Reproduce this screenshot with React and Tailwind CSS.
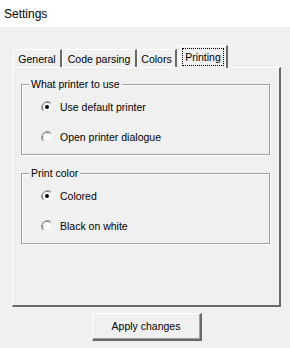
import React from "react";

function Radio({ checked }) {
  return (
    <svg width="12" height="12" viewBox="0 0 12 12" className="shrink-0">
      <path d="M10.2 1.8 A6 6 0 0 0 1.8 10.2" fill="none" stroke="#a0a0a0" strokeWidth="1" />
      <path d="M1.8 10.2 A6 6 0 0 0 10.2 1.8" fill="none" stroke="#ffffff" strokeWidth="1" />
      <path d="M9.5 2.5 A5 5 0 0 0 2.5 9.5" fill="none" stroke="#696969" strokeWidth="1" />
      <path d="M2.5 9.5 A5 5 0 0 0 9.5 2.5" fill="none" stroke="#e3e3e3" strokeWidth="1" />
      <circle cx="6" cy="6" r="4" fill="#ffffff" />
      {checked && <circle cx="6" cy="6" r="2" fill="#000000" />}
    </svg>
  );
}

function RadioRow({ checked, label }) {
  return (
    <div className="flex items-center h-[14px] pl-[19px]">
      <Radio checked={checked} />
      <span className="ml-[7px] text-[10.5px] leading-[14px] text-black whitespace-nowrap">{label}</span>
    </div>
  );
}

function Group({ title, children }) {
  return (
    <div className="relative w-[249px] h-[71px] border border-[#a0a0a0] shadow-[inset_1px_1px_0_#ffffff,1px_1px_0_#ffffff]">
      <span className="absolute left-[7px] top-[-9px] px-[2px] bg-[#f0f0f0] text-[10.5px] leading-[16px] text-black whitespace-nowrap">
        {title}
      </span>
      <div className="flex flex-col gap-[16px] pt-[15px]">{children}</div>
    </div>
  );
}

function Tab({ label, selected, w }) {
  if (selected) {
    return (
      <div className={`relative z-10 ${w} h-[23px] -mb-[1px] px-[2px] pt-[2px] bg-[#f0f0f0] border-t border-l border-white border-r-2 border-r-[#696969]`}>
        <span className="block text-center text-[10.5px] leading-[16px] text-black border border-dotted border-black whitespace-nowrap">
          {label}
        </span>
      </div>
    );
  }
  return (
    <div className={`${w} h-[18px] pt-[1px] text-center border-t border-l border-white border-r-2 border-r-[#696969] text-[10.5px] leading-[16px] text-black whitespace-nowrap`}>
      {label}
    </div>
  );
}

export default function App() {
  return (
    <div
      className="w-[290px] h-[348px] bg-[#f0f0f0] overflow-hidden flex flex-col"
      style={{ fontFamily: '"Liberation Sans", Arial, sans-serif' }}
    >
      <div className="h-[27px] bg-white flex items-center pl-[4px] text-[12px] text-black">
        Settings
      </div>
      <div className="pl-[12px] pt-[18px]">
        <div className="flex items-end pl-[1px] h-[22px]">
          <Tab label="General" w="w-[49px]" />
          <Tab label="Code parsing" w="w-[75px]" />
          <Tab label="Colors" w="w-[40px]" />
          <div className="w-[2px]" />
          <Tab label="Printing" w="w-[49px]" selected />
        </div>
        <div className="w-[269px] h-[240px] border-t border-l border-white border-r-2 border-b-2 border-r-[#696969] border-b-[#696969] pl-[8px] pt-[16px] flex flex-col gap-[18px]">
          <Group title="What printer to use">
            <RadioRow checked label="Use default printer" />
            <RadioRow label="Open printer dialogue" />
          </Group>
          <Group title="Print color">
            <RadioRow checked label="Colored" />
            <RadioRow label="Black on white" />
          </Group>
        </div>
        <div className="w-[269px] flex justify-center pt-[6px]">
          <button className="w-[110px] h-[28px] bg-[#f0f0f0] border-t border-l border-white border-r-2 border-b-2 border-r-[#696969] border-b-[#696969] shadow-[inset_-1px_-1px_0_#a0a0a0] text-[10.5px] text-black">
            Apply changes
          </button>
        </div>
      </div>
    </div>
  );
}
